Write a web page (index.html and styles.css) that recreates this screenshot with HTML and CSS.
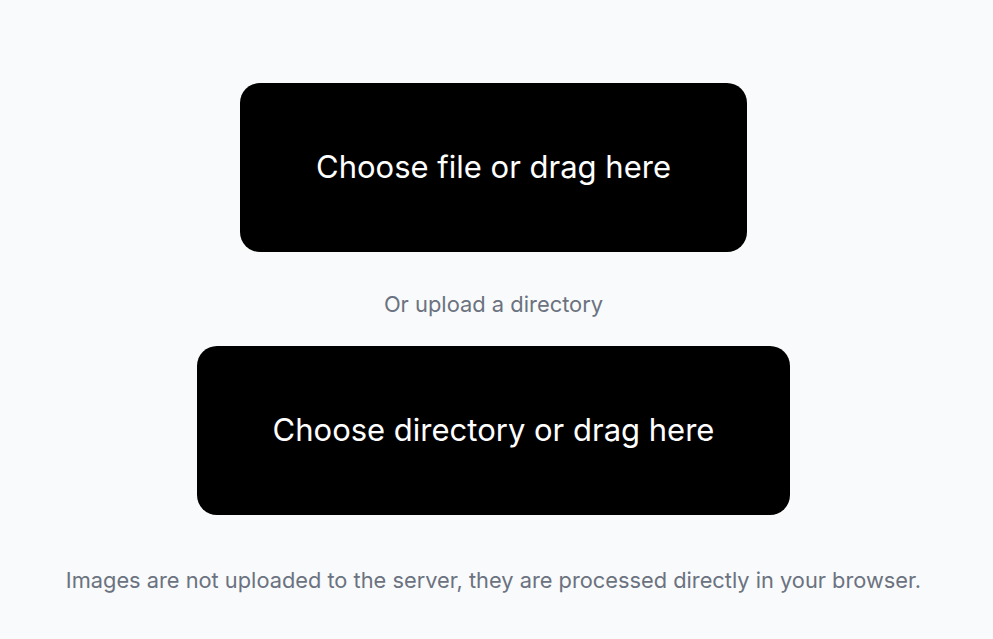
FILE: index.html
```html
<!DOCTYPE html>
<html>
<head>
<meta charset="utf-8">
<link rel="stylesheet" href="styles.css">
</head>
<body>
<main class="page">
  <label class="drop">Choose file or drag here</label>
  <p class="or">Or upload a directory</p>
  <label class="drop">Choose directory or drag here</label>
  <p class="note">Images are not uploaded to the server, they are processed directly in your browser.</p>
</main>
</body>
</html>
```
FILE: styles.css
```css
html, body {
  margin: 0;
  padding: 0;
  background: #f9fafb;
  font-family: Inter, "Noto Sans", sans-serif;
}
.page {
  display: flex;
  flex-direction: column;
  align-items: center;
  padding: 83px 6px 0 0;
}
.drop {
  display: block;
  background: #000;
  color: #fff;
  border-radius: 20px;
  font-size: 31px;
  line-height: 40px;
  padding: 64px 76px 65px;
  cursor: pointer;
}
.or {
  margin: 38px 0 28px;
  font-size: 21.9px;
  line-height: 28px;
  color: #6b7280;
}
.note {
  margin: 51px 0 0;
  font-size: 21.8px;
  line-height: 28px;
  color: #6b7280;
}
```
